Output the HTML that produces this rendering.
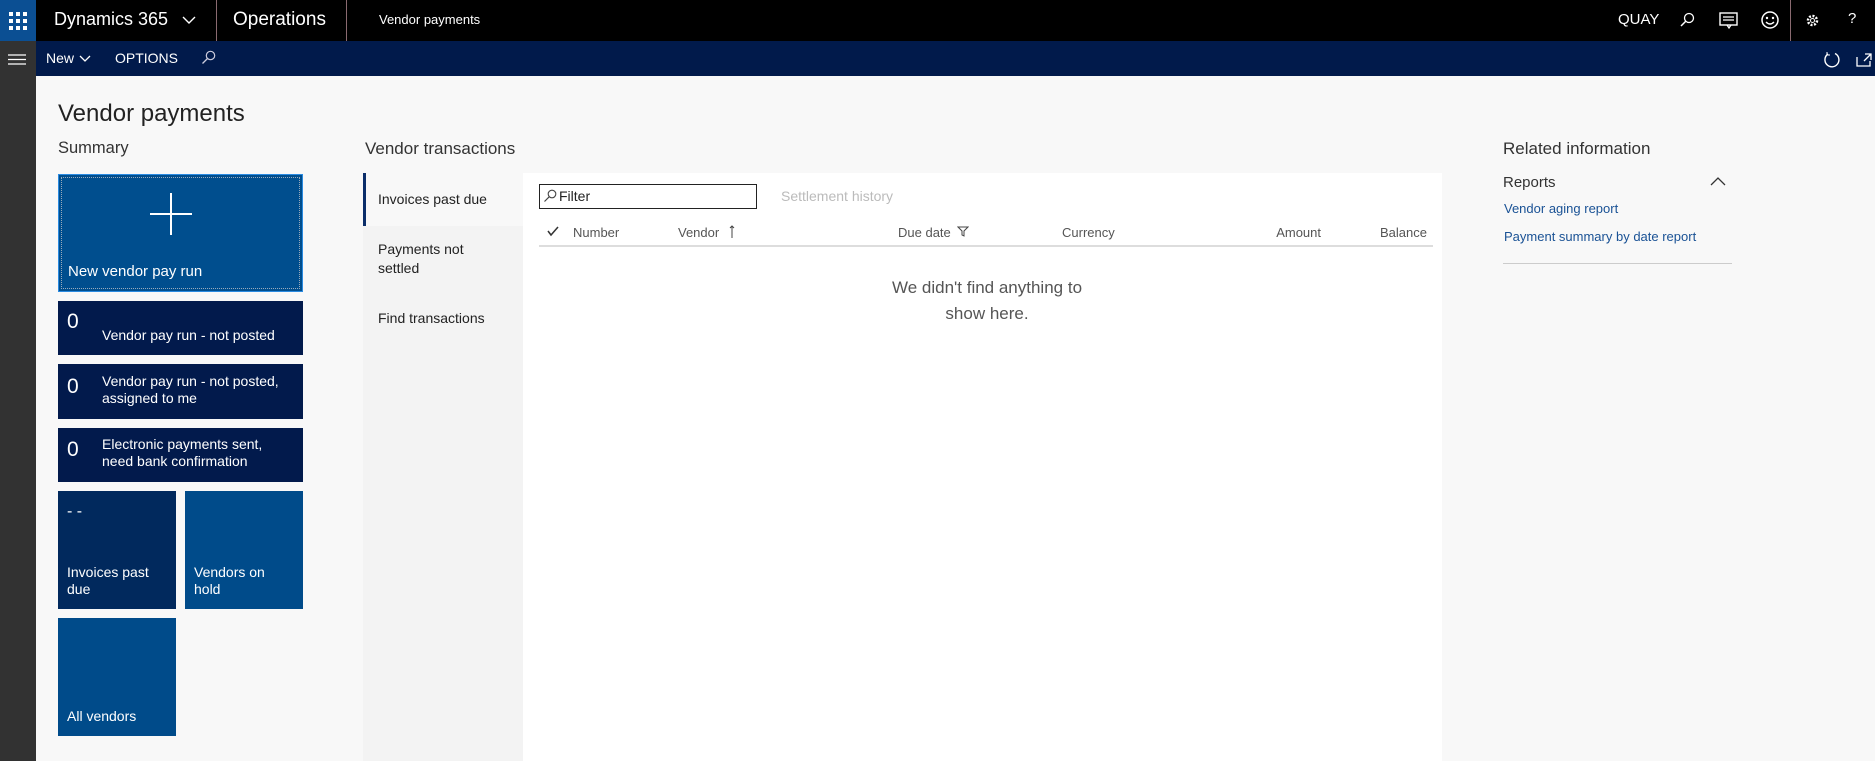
<!DOCTYPE html>
<html><head><meta charset="utf-8"><style>
*{margin:0;padding:0;box-sizing:border-box}
body{width:1875px;height:761px;overflow:hidden;background:#f8f8f8;font-family:"Segoe UI","Liberation Sans",sans-serif;position:relative;color:#333}
.a{position:absolute;white-space:nowrap}
.top{left:0;top:0;width:1875px;height:41px;background:#000}
.nav{left:0;top:41px;width:1875px;height:35px;background:#011a4b}
.side{left:0;top:41px;width:36px;height:720px;background:#323232}
.w{color:#fff}
.tile{position:absolute;color:#fff;font-size:14px}
.num{position:absolute;left:9px;font-size:21px}
.tab{position:absolute;left:378px;font-size:14px;color:#222}
.col{position:absolute;top:225px;font-size:13px;color:#555}
.lnk{color:#1a5295;font-size:13px}
</style></head><body>
<div class="a top"></div>
<div class="a" style="left:0;top:0;width:36px;height:41px;background:#0b4f93"></div>
<svg class="a" style="left:9px;top:12px" width="18" height="18"><g fill="#fff"><rect x="0" y="0" width="4" height="4"/><rect x="7" y="0" width="4" height="4"/><rect x="14" y="0" width="4" height="4"/><rect x="0" y="7" width="4" height="4"/><rect x="7" y="7" width="4" height="4"/><rect x="14" y="7" width="4" height="4"/><rect x="0" y="14" width="4" height="4"/><rect x="7" y="14" width="4" height="4"/><rect x="14" y="14" width="4" height="4"/></g></svg>
<div class="a w" style="left:54px;top:9px;font-size:18px">Dynamics 365</div>
<svg class="a" style="left:182px;top:16px" width="14" height="9"><path d="M1 1l6 6 6-6" stroke="#fff" fill="none" stroke-width="1.4"/></svg>
<div class="a" style="left:216px;top:0;width:1px;height:41px;background:#8a6a70"></div>
<div class="a w" style="left:233px;top:9px;font-size:19px">Operations</div>
<div class="a" style="left:346px;top:0;width:1px;height:41px;background:#8a6a70"></div>
<div class="a w" style="left:379px;top:12px;font-size:13px">Vendor payments</div>
<div class="a w" style="left:1618px;top:11px;font-size:15px">QUAY</div>
<svg class="a" style="left:1679px;top:12px" width="16" height="16"><circle cx="10" cy="6" r="4.5" stroke="#fff" fill="none" stroke-width="1.3"/><path d="M7 9L2 14" stroke="#fff" stroke-width="1.5"/></svg>
<svg class="a" style="left:1719px;top:12px" width="20" height="18"><rect x="1" y="1" width="17" height="12" stroke="#fff" fill="none" stroke-width="1.4"/><path d="M4 5h11M4 8h11M8 13l2 3 2-3" stroke="#fff" fill="none" stroke-width="1.3"/></svg>
<svg class="a" style="left:1760px;top:10px" width="20" height="20"><circle cx="10" cy="10" r="8" stroke="#fff" fill="none" stroke-width="1.5"/><circle cx="7" cy="8" r="1.2" fill="#fff"/><circle cx="13" cy="8" r="1.2" fill="#fff"/><path d="M6 12q4 4 8 0" stroke="#fff" fill="none" stroke-width="1.4"/></svg>
<div class="a" style="left:1790px;top:0;width:1px;height:41px;background:#8a6a70"></div>
<svg class="a" style="left:1805px;top:13px" width="15" height="15"><circle cx="7.5" cy="7.5" r="4.5" stroke="#fff" fill="none" stroke-width="2.5" stroke-dasharray="2 1.5"/><circle cx="7.5" cy="7.5" r="2" stroke="#fff" fill="none" stroke-width="1"/></svg>
<div class="a w" style="left:1848px;top:10px;font-size:15px">?</div>
<div class="a nav"></div>
<div class="a side"></div>
<svg class="a" style="left:8px;top:54px" width="18" height="11"><path d="M0 1h18M0 5.5h18M0 10h18" stroke="#fff" stroke-width="1.3"/></svg>
<div class="a w" style="left:46px;top:50px;font-size:14px">New</div>
<svg class="a" style="left:79px;top:55px" width="12" height="8"><path d="M1 1l5 5 5-5" stroke="#fff" fill="none" stroke-width="1.3"/></svg>
<div class="a w" style="left:115px;top:50px;font-size:14px">OPTIONS</div>
<svg class="a" style="left:201px;top:50px" width="15" height="15"><circle cx="9.5" cy="5.5" r="4.2" stroke="#ccd" fill="none" stroke-width="1.2"/><path d="M6.5 8.5L1.5 13.5" stroke="#ccd" stroke-width="1.3"/></svg>
<svg class="a" style="left:1823px;top:51px" width="18" height="18"><path d="M5 3A7 7 0 1 0 12 2.5" stroke="#fff" fill="none" stroke-width="1.4"/><path d="M4 1v3h3" stroke="#fff" fill="none" stroke-width="1"/></svg>
<svg class="a" style="left:1856px;top:53px" width="17" height="14"><path d="M1 4v9h13V8M9 1h6v6M15 1L8 8" stroke="#fff" fill="none" stroke-width="1.3"/></svg>

<div class="a" style="left:58px;top:100px;font-size:24px;font-weight:300;color:#222">Vendor payments</div>
<div class="a" style="left:58px;top:139px;font-size:16.5px;font-weight:300;color:#333">Summary</div>

<div class="tile" style="left:58px;top:174px;width:245px;height:118px;background:#004e8e;border:1px solid #2a8ae0;outline:1px dotted #9ab;outline-offset:-4px">
<svg style="position:absolute;left:91px;top:18px" width="42" height="42"><path d="M21 0v42M0 21h42" stroke="#fff" stroke-width="2"/></svg>
<div style="position:absolute;left:9px;top:88px;font-size:15px">New vendor pay run</div></div>
<div class="tile" style="left:58px;top:301px;width:245px;height:54px;background:#021a4c"><div class="num" style="top:9px">0</div><div style="position:absolute;left:44px;top:26px">Vendor pay run - not posted</div></div>
<div class="tile" style="left:58px;top:364px;width:245px;height:55px;background:#021a4c"><div class="num" style="top:11px">0</div><div style="position:absolute;left:44px;top:9px;line-height:17px">Vendor pay run - not posted,<br>assigned to me</div></div>
<div class="tile" style="left:58px;top:428px;width:245px;height:54px;background:#021a4c"><div class="num" style="top:10px">0</div><div style="position:absolute;left:44px;top:8px;line-height:17px">Electronic payments sent,<br>need bank confirmation</div></div>
<div class="tile" style="left:58px;top:491px;width:118px;height:118px;background:#01295d"><div style="position:absolute;left:9px;top:12px;font-size:16px">- -</div><div style="position:absolute;left:9px;top:73px;line-height:17px">Invoices past<br>due</div></div>
<div class="tile" style="left:185px;top:491px;width:118px;height:118px;background:#004b8a"><div style="position:absolute;left:9px;top:73px;line-height:17px">Vendors on<br>hold</div></div>
<div class="tile" style="left:58px;top:618px;width:118px;height:118px;background:#004b8a"><div style="position:absolute;left:9px;top:90px">All vendors</div></div>

<div class="a" style="left:365px;top:139px;font-size:17px;font-weight:300;color:#333">Vendor transactions</div>
<div class="a" style="left:363px;top:173px;width:160px;height:588px;background:#f3f3f3"></div>
<div class="a" style="left:363px;top:173px;width:160px;height:53px;background:#f8f8f8;border-left:3px solid #0b2e6a"></div>
<div class="tab" style="top:191px">Invoices past due</div>
<div class="tab" style="top:240px;line-height:19px">Payments not<br>settled</div>
<div class="tab" style="top:310px">Find transactions</div>
<div class="a" style="left:523px;top:173px;width:919px;height:588px;background:#fff"></div>
<div class="a" style="left:539px;top:184px;width:218px;height:25px;border:1px solid #222;background:#fff"></div>
<svg class="a" style="left:543px;top:189px" width="14" height="14"><circle cx="9" cy="5" r="3.8" stroke="#444" fill="none" stroke-width="1.1"/><path d="M6.3 7.7L1.5 12.5" stroke="#444" stroke-width="1.2"/></svg>
<div class="a" style="left:559px;top:188px;font-size:14px;color:#222">Filter</div>
<div class="a" style="left:781px;top:188px;font-size:14px;color:#bbb">Settlement history</div>
<svg class="a" style="left:547px;top:226px" width="12" height="11"><path d="M1 5l3 4 7-8" stroke="#333" fill="none" stroke-width="1.5"/></svg>
<div class="col" style="left:573px">Number</div>
<div class="col" style="left:678px">Vendor</div>
<svg class="a" style="left:729px;top:225px" width="6" height="13"><path d="M3 1v12M1 3l2-2 2 2" stroke="#444" fill="none" stroke-width="1"/></svg>
<div class="col" style="left:898px">Due date</div>
<svg class="a" style="left:957px;top:226px" width="12" height="11"><path d="M1 1h10L7 5v5L5 9V5z" stroke="#444" fill="none" stroke-width="1"/></svg>
<div class="col" style="left:1062px">Currency</div>
<div class="col" style="left:1271px;width:50px;text-align:right">Amount</div>
<div class="col" style="left:1377px;width:50px;text-align:right">Balance</div>
<div class="a" style="left:539px;top:245px;width:894px;height:2px;background:#ddd"></div>
<div class="a" style="left:887px;top:275px;width:200px;text-align:center;font-size:17px;line-height:26px;color:#555;font-weight:300">We didn't find anything to<br>show here.</div>

<div class="a" style="left:1503px;top:139px;font-size:17px;font-weight:300;color:#333">Related information</div>
<div class="a" style="left:1503px;top:174px;font-size:15px;color:#333">Reports</div>
<svg class="a" style="left:1710px;top:177px" width="16" height="9"><path d="M1 8l7-7 7 7" stroke="#333" fill="none" stroke-width="1.3"/></svg>
<div class="a lnk" style="left:1504px;top:201px">Vendor aging report</div>
<div class="a lnk" style="left:1504px;top:229px">Payment summary by date report</div>
<div class="a" style="left:1503px;top:263px;width:229px;height:1px;background:#ccc"></div>
</body></html>
